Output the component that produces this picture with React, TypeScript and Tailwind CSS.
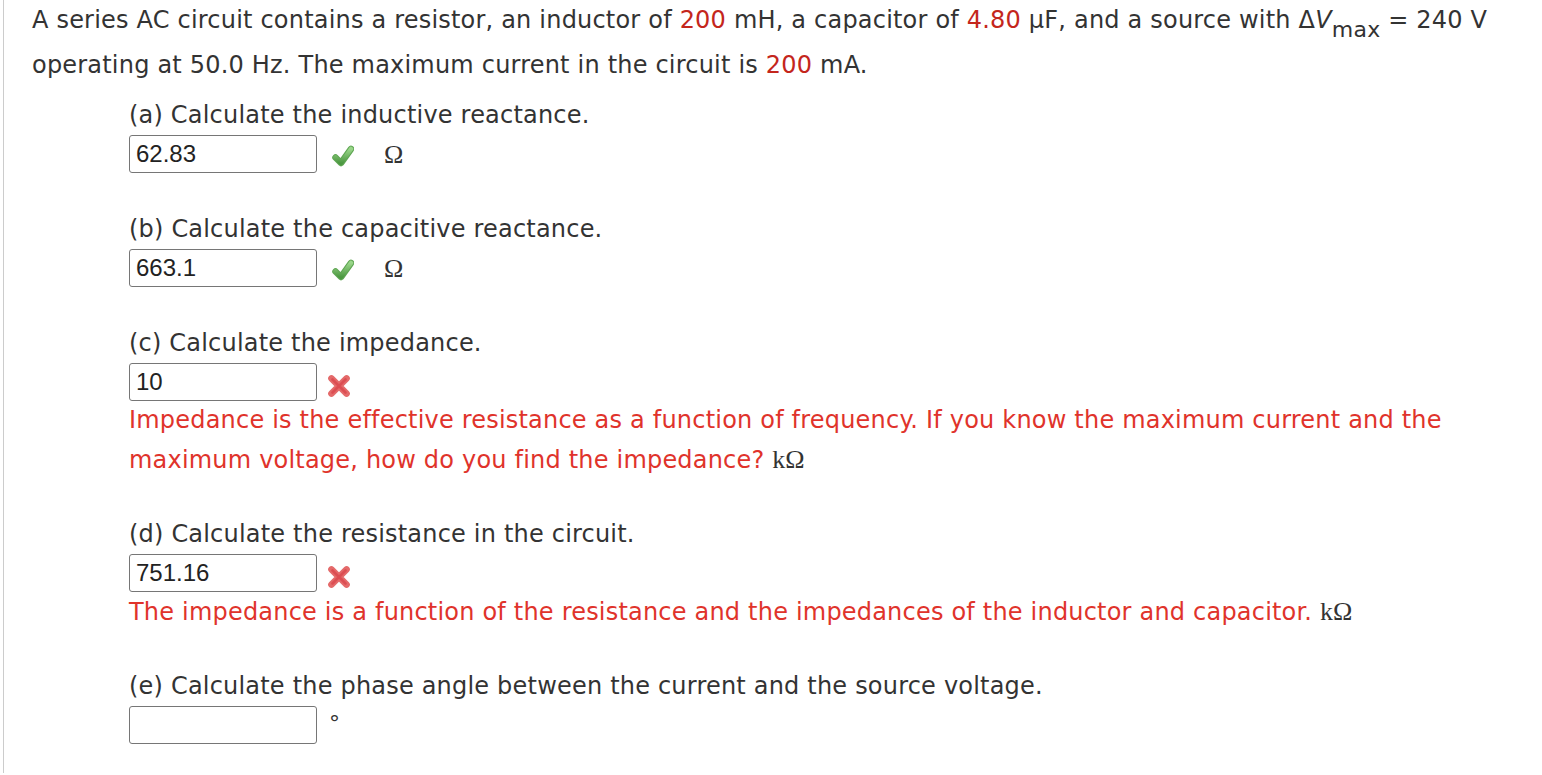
import React from 'react';

const red = 'text-[#c4261c]';

function Check() {
  return (
    <svg width="22" height="24" viewBox="0 0 22 24" className="ml-[15px] mt-[4px]">
      <defs>
        <linearGradient id="g" x1="0" y1="0" x2="0" y2="1">
          <stop offset="0" stopColor="#9ad68a" />
          <stop offset="1" stopColor="#4c9841" />
        </linearGradient>
      </defs>
      <polyline points="3.5,13.5 9,19 19,5" fill="none" stroke="#5fa653" strokeWidth="6.5" strokeLinecap="round" strokeLinejoin="round" />
      <polyline points="3.5,13.5 9,19 19,5" fill="none" stroke="url(#g)" strokeWidth="4.5" strokeLinecap="round" strokeLinejoin="round" />
    </svg>
  );
}

function Cross() {
  return (
    <svg width="26" height="26" viewBox="0 0 24 24" className="ml-[9px] mt-[8px]">
      <path d="M5 5 L19 19 M19 5 L5 19" stroke="#e46a6a" strokeWidth="6" strokeLinecap="round" />
      <path d="M6 6 L18 18 M18 6 L6 18" stroke="#d9434a" strokeWidth="2.5" strokeLinecap="round" opacity="0.7" />
    </svg>
  );
}

function Field({ value }: { value: string }) {
  return (
    <div className="w-[188px] h-[38px] border border-[#767676] rounded-[3px] bg-white px-[6px] flex items-center text-[24px] tracking-normal text-[#222] font-['Liberation_Sans',Arial,sans-serif]">
      {value}
    </div>
  );
}

function Unit({ children }: { children: React.ReactNode }) {
  return <span className="font-['Liberation_Serif',serif] text-[26px] tracking-normal text-[#333]">{children}</span>;
}

function Part({
  label,
  value,
  status,
  unit,
  feedback,
}: {
  label: string;
  value: string;
  status?: 'ok' | 'bad';
  unit?: React.ReactNode;
  feedback?: React.ReactNode;
}) {
  return (
    <div className={feedback ? 'pl-[97px] mb-[34px]' : 'pl-[97px] mb-[36px]'}>
      <div className="leading-[40px]">{label}</div>
      <div className="flex items-center h-[38px]">
        <Field value={value} />
        {status === 'ok' && <Check />}
        {status === 'bad' && <Cross />}
        {unit && <span className={status === 'ok' ? 'ml-[30px]' : 'ml-[10px]'}>{unit}</span>}
      </div>
      {feedback && <div className="text-[#e0332b] leading-[39px]">{feedback}</div>}
    </div>
  );
}

export default function App() {
  return (
    <div className="min-h-[775px] bg-white border-l border-[#cccccc] ml-[3px] pl-[28px] pt-0 font-['DejaVu_Sans',Verdana,sans-serif] text-[24px] tracking-[0.2px] text-[#333]">
      <p className="leading-[44px] -mt-[2px]">
        A series AC circuit contains a resistor, an inductor of <span className={red}>200</span> mH, a capacitor of{' '}
        <span className={red}>4.80</span> μF, and a source with Δ<i>V</i>
        <span className="relative top-[9px] text-[22px]">max</span> = 240 V operating at 50.0 Hz. The maximum current in the circuit is{' '}
        <span className={red}>200</span> mA.
      </p>
      <div className="h-[8px]" />
      <Part label="(a) Calculate the inductive reactance." value="62.83" status="ok" unit={<Unit>Ω</Unit>} />
      <Part label="(b) Calculate the capacitive reactance." value="663.1" status="ok" unit={<Unit>Ω</Unit>} />
      <Part
        label="(c) Calculate the impedance."
        value="10"
        status="bad"
        feedback={
          <>
            Impedance is the effective resistance as a function of frequency. If you know the maximum current and the
            maximum voltage, how do you find the impedance? <Unit>kΩ</Unit>
          </>
        }
      />
      <Part
        label="(d) Calculate the resistance in the circuit."
        value="751.16"
        status="bad"
        feedback={
          <>
            The impedance is a function of the resistance and the impedances of the inductor and capacitor. <Unit>kΩ</Unit>
          </>
        }
      />
      <Part
        label="(e) Calculate the phase angle between the current and the source voltage."
        value=""
        unit={<span className="text-[22px] relative -top-[2px] ml-[2px]">°</span>}
      />
    </div>
  );
}
